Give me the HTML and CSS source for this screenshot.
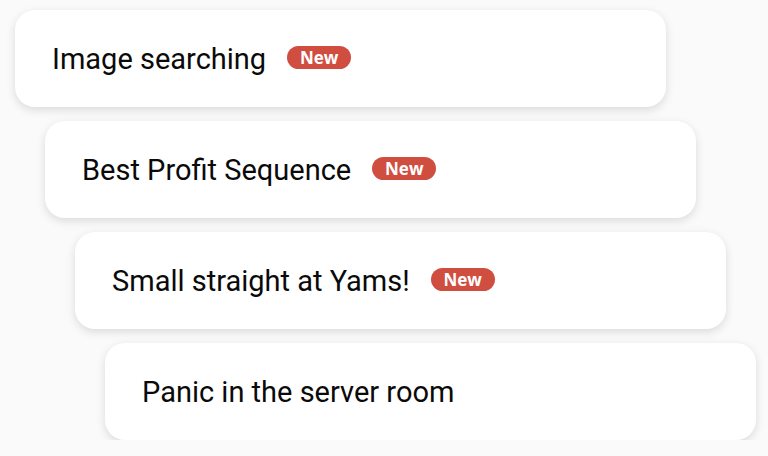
FILE: index.html
```html
<!DOCTYPE html>
<html>
<head>
<meta charset="utf-8">
<link rel="stylesheet" href="styles.css">
</head>
<body>
<div class="stack">
  <div class="card card-1"><span class="title">Image searching</span><span class="badge">New</span></div>
  <div class="card card-2"><span class="title">Best Profit Sequence</span><span class="badge">New</span></div>
  <div class="card card-3"><span class="title">Small straight at Yams!</span><span class="badge">New</span></div>
  <div class="card card-4"><span class="title">Panic in the server room</span></div>
</div>
</body>
</html>
```
FILE: styles.css
```css
html, body {
  margin: 0;
  padding: 0;
  background: #fafafa;
}
.stack {
  display: flex;
  flex-direction: column;
  gap: 14px;
  padding: 10px 0 0 15px;
}
.card {
  box-sizing: border-box;
  width: 651px;
  height: 97px;
  background: #ffffff;
  border-radius: 20px;
  box-shadow: 0 3px 10px rgba(0, 0, 0, 0.13);
  display: flex;
  align-items: center;
  padding-left: 37px;
  gap: 21px;
}
.card-2 { margin-left: 30px; }
.card-3 { margin-left: 60px; }
.card-4 { margin-left: 90px; }
.title {
  font-family: Roboto, "Liberation Sans", sans-serif;
  font-size: 29px;
  color: #0a0a0a;
}
.badge {
  font-family: "Open Sans", "Liberation Sans", sans-serif;
  font-weight: 700;
  font-size: 17px;
  color: #ffffff;
  background: #cf4e40;
  border-radius: 12px;
  height: 23px;
  width: 64px;
  display: flex;
  align-items: center;
  justify-content: center;
  margin-top: -2px;
}
```
